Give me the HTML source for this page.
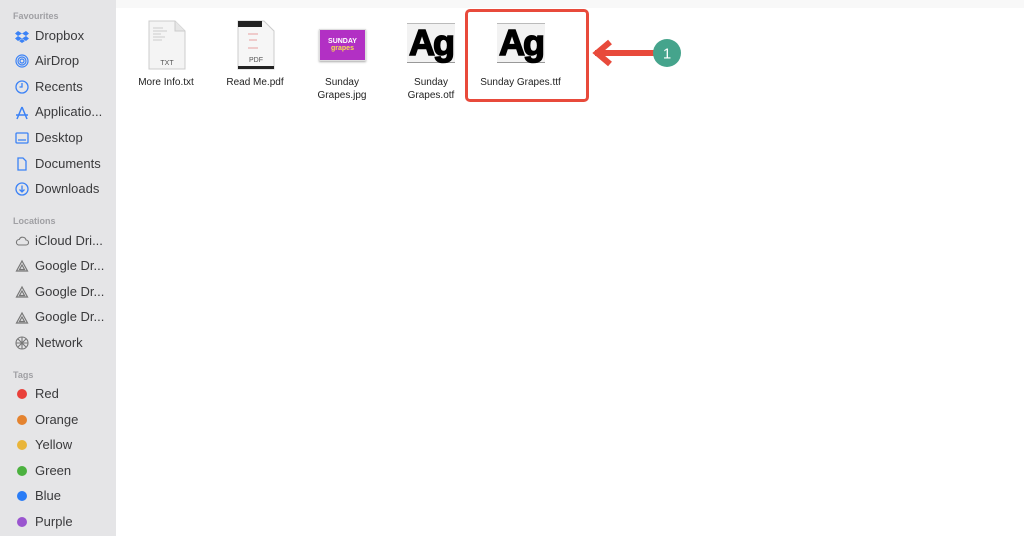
<!DOCTYPE html>
<html><head><style>
*{margin:0;padding:0;box-sizing:border-box}
body{width:1024px;height:536px;overflow:hidden;background:#fff;font-family:"Liberation Sans",sans-serif;position:relative}
#sb{position:absolute;left:0;top:0;width:116px;height:536px;background:#e5e5e7}
.h{position:absolute;left:13px;font-size:9px;color:#a0a0a4;font-weight:bold}
.i{position:absolute;left:35px;font-size:13px;color:#3a3a3c;white-space:nowrap}
.ic{position:absolute;left:15px;width:14px;height:14px}
.d{position:absolute;left:17px;width:10px;height:10px;border-radius:50%}
.lbl{position:absolute;font-size:10px;color:#222;text-align:center;width:90px;line-height:13px}
.ag{position:absolute;width:48px;height:40px;background:#f2f2f2;border-top:1px solid #bbb;border-bottom:1px solid #999;font:bold 36px/38px 'Liberation Sans',sans-serif;color:#000;text-align:center;letter-spacing:-2px;-webkit-text-stroke:1.5px #000}
</style></head><body>
<div style="position:absolute;left:116px;top:0;width:908px;height:8px;background:#f8f8f8"></div>
<div id="sb">
<div class="h" style="top:11px">Favourites</div>
<svg class="ic" style="top:29px" viewBox="0 0 14 14" fill="#3b82f6"><path d="M3 2l4 2.5-4 2.5-3-2.5zM11 2l3 2.5-3 2.5-4-2.5zM3 7l4 2.5-4 2.5-3-2.5z M11 7l3 2.5-3 2.5-4-2.5zM4 12l3 2 3-2-3-2z"/></svg>
<div class="i" style="top:28px">Dropbox</div>
<svg class="ic" style="top:54px" viewBox="0 0 14 14" fill="none" stroke="#3b82f6" stroke-width="1.2"><circle cx="7" cy="7" r="6"/><circle cx="7" cy="7" r="4"/><circle cx="7" cy="7" r="2"/></svg>
<div class="i" style="top:53px">AirDrop</div>
<svg class="ic" style="top:80px" viewBox="0 0 14 14" fill="none" stroke="#3b82f6" stroke-width="1.3"><circle cx="7" cy="7" r="6"/><path d="M7 3v4H4.5"/></svg>
<div class="i" style="top:79px">Recents</div>
<svg class="ic" style="top:106px" viewBox="0 0 14 14" fill="none" stroke="#3b82f6" stroke-width="1.5"><path d="M7 1L2 13M7 1l5 12M1 9h12"/></svg>
<div class="i" style="top:104px">Applicatio...</div>
<svg class="ic" style="top:131px" viewBox="0 0 14 14" fill="none" stroke="#3b82f6" stroke-width="1.3"><rect x="1" y="2" width="12" height="10" rx="1"/><path d="M3 9h8"/></svg>
<div class="i" style="top:130px">Desktop</div>
<svg class="ic" style="top:157px" viewBox="0 0 14 14" fill="none" stroke="#3b82f6" stroke-width="1.3"><path d="M3 1h5l3 3v9H3z"/></svg>
<div class="i" style="top:156px">Documents</div>
<svg class="ic" style="top:182px" viewBox="0 0 14 14" fill="none" stroke="#3b82f6" stroke-width="1.3"><circle cx="7" cy="7" r="6"/><path d="M7 3.5v6M4.5 7.5l2.5 2.5 2.5-2.5"/></svg>
<div class="i" style="top:181px">Downloads</div>
<div class="h" style="top:216px">Locations</div>
<svg class="ic" style="top:234px" viewBox="0 0 14 14" fill="none" stroke="#777" stroke-width="1.1"><path d="M3.5 11h7.5a2.5 2.5 0 0 0 0-5 3.5 3.5 0 0 0-6.7-.5A2.8 2.8 0 0 0 3.5 11z"/></svg>
<div class="i" style="top:233px">iCloud Dri...</div>
<svg class="ic" style="top:259px" viewBox="0 0 14 14" fill="none" stroke="#777" stroke-width="1.2"><path d="M7 2L1.5 12h11z M7 6l-2.5 4.5h5z"/></svg>
<div class="i" style="top:258px">Google Dr...</div>
<svg class="ic" style="top:285px" viewBox="0 0 14 14" fill="none" stroke="#777" stroke-width="1.2"><path d="M7 2L1.5 12h11z M7 6l-2.5 4.5h5z"/></svg>
<div class="i" style="top:284px">Google Dr...</div>
<svg class="ic" style="top:311px" viewBox="0 0 14 14" fill="none" stroke="#777" stroke-width="1.2"><path d="M7 2L1.5 12h11z M7 6l-2.5 4.5h5z"/></svg>
<div class="i" style="top:309px">Google Dr...</div>
<svg class="ic" style="top:336px" viewBox="0 0 14 14" fill="none" stroke="#777" stroke-width="1.1"><circle cx="7" cy="7" r="6"/><path d="M1 7h12M7 1v12M3 3l8 8M11 3l-8 8"/></svg>
<div class="i" style="top:335px">Network</div>
<div class="h" style="top:370px">Tags</div>
<div class="d" style="top:389px;background:#e9403a"></div><div class="i" style="top:386px">Red</div>
<div class="d" style="top:415px;background:#e4832f"></div><div class="i" style="top:412px">Orange</div>
<div class="d" style="top:440px;background:#e9b53a"></div><div class="i" style="top:437px">Yellow</div>
<div class="d" style="top:466px;background:#4bb13f"></div><div class="i" style="top:463px">Green</div>
<div class="d" style="top:491px;background:#2a7cf6"></div><div class="i" style="top:488px">Blue</div>
<div class="d" style="top:517px;background:#9a55cf"></div><div class="i" style="top:514px">Purple</div>
</div>

<svg style="position:absolute;left:147px;top:20px" width="40" height="50" viewBox="0 0 40 50"><path d="M2 1h26l10 10v38H2z" fill="#f4f4f4" stroke="#ccc"/><path d="M28 1v10h10" fill="#e6e6e6" stroke="#ccc"/><g stroke="#ccc" stroke-width="1"><path d="M6 8h10M6 11h14M6 14h8M6 17h12M6 20h9"/></g><text x="20" y="45" font-size="7" text-anchor="middle" fill="#555" font-family="Liberation Sans">TXT</text></svg>
<div class="lbl" style="left:121px;top:76px">More Info.txt</div>
<svg style="position:absolute;left:236px;top:20px" width="40" height="50" viewBox="0 0 40 50"><path d="M2 1h26l10 10v38H2z" fill="#f6f6f6" stroke="#ccc"/><rect x="2" y="1" width="24" height="6" fill="#222"/><g stroke="#e8a0a0"><path d="M12 14h10M13 20h8M12 28h10"/></g><rect x="2" y="46" width="36" height="3" fill="#222"/><text x="20" y="42" font-size="7" text-anchor="middle" fill="#555" font-family="Liberation Sans">PDF</text></svg>
<div class="lbl" style="left:210px;top:76px">Read Me.pdf</div>
<div style="position:absolute;left:319px;top:29px;width:47px;height:32px;background:#b230c4;border:1px solid #ddd;box-shadow:0 1px 2px #aaa"><div style="color:#fff;font-size:7px;font-weight:bold;text-align:center;margin-top:8px;line-height:7px">SUNDAY<br><span style="color:#f4e04d">grapes</span></div></div>
<div class="lbl" style="left:297px;top:76px">Sunday<br>Grapes.jpg</div>
<div class="ag" style="left:407px;top:23px">Ag</div>
<div class="lbl" style="left:386px;top:76px">Sunday<br>Grapes.otf</div>
<div class="ag" style="left:497px;top:23px">Ag</div>
<div class="lbl" style="left:473px;top:76px;width:95px">Sunday Grapes.ttf</div>
<div style="position:absolute;left:465px;top:9px;width:124px;height:93px;border:3px solid #e84a3b;border-radius:5px"></div>
<svg style="position:absolute;left:588px;top:36px" width="100" height="36" viewBox="588 36 100 36"><path d="M595 53h62" stroke="#e84a3b" stroke-width="6"/><path d="M610 42l-13 11 13 11" fill="none" stroke="#e84a3b" stroke-width="6"/><circle cx="667" cy="53" r="14" fill="#45a48c"/><text x="667" y="58.5" font-size="15" fill="#fff" text-anchor="middle" font-family="Liberation Sans">1</text></svg>
</body></html>
